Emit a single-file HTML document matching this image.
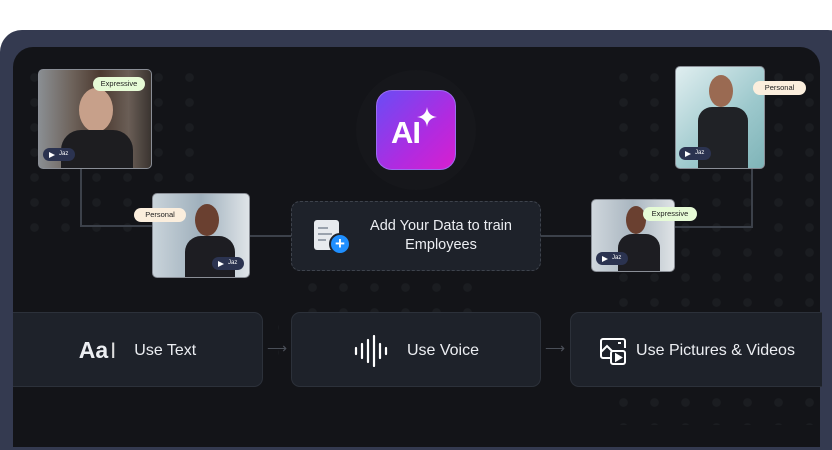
<!DOCTYPE html>
<html><head><meta charset="utf-8"><style>
*{margin:0;padding:0;box-sizing:border-box}
html,body{width:832px;height:420px}
body{background:#fff;position:relative;overflow:hidden;font-family:"Liberation Sans",sans-serif}
.abs{position:absolute}
.bezel{left:0;top:30px;width:850px;height:420px;background:#343a50;border-radius:22px 22px 0 0}
.inner{left:13px;top:47px;width:807px;height:400px;background:#131418;border-radius:20px 20px 0 0;overflow:hidden}
.dots{position:absolute;background-image:radial-gradient(circle,#1b1d21 4px,transparent 4.6px);background-size:31px 25px}
.card{position:absolute;border:1.5px solid #8a8e96;border-radius:5px;overflow:hidden}
.tag{position:absolute;font-size:7.5px;color:#222;border-radius:8px;text-align:center;line-height:14px;height:14px}
.jaz{position:absolute;background:#2b3350;color:#fff;font-size:6px;border-radius:8px;height:13px;line-height:13px;padding:0 7px 0 16px}
.jaz:before{content:"";position:absolute;left:6px;top:3.5px;border-left:6px solid #fff;border-top:3px solid transparent;border-bottom:3px solid transparent}
.line{position:absolute;background:#3c414a}
.box{position:absolute;background:#1e222a;border:1px solid #2c313a;border-radius:9px;color:#eceef2;font-size:16px;display:flex;align-items:center;justify-content:center}
.arr{position:absolute;color:#4a4f58;font-size:14px}
</style></head><body>
<div class="abs bezel"></div>
<div class="abs inner">
 <div class="dots" style="left:6px;top:18px;width:190px;height:175px"></div>
 <div class="dots" style="left:6px;top:268px;width:260px;height:60px"></div>
 <div class="dots" style="left:284px;top:178px;width:190px;height:135px"></div>
 <div class="dots" style="left:595px;top:18px;width:210px;height:360px"></div>
</div>
<!-- lines -->
<div class="line" style="left:80px;top:169px;width:2px;height:57px"></div>
<div class="line" style="left:80px;top:225px;width:74px;height:2px"></div>
<div class="line" style="left:250px;top:235px;width:42px;height:2px"></div>
<div class="line" style="left:540px;top:235px;width:52px;height:2px"></div>
<div class="line" style="left:675px;top:226px;width:78px;height:2px"></div>
<div class="line" style="left:751px;top:169px;width:2px;height:59px"></div>
<!-- AI glow + icon -->
<div class="abs" style="left:356px;top:70px;width:120px;height:120px;border-radius:50%;background:#16171b"></div>
<div class="abs" style="left:376px;top:90px;width:80px;height:80px;border-radius:16px;background:linear-gradient(135deg,#6a4cf5,#b02be0 60%,#d81fcf);border:1px solid #9c6cf0"></div>
<div class="abs" style="left:391px;top:115px;color:#fff;font-weight:bold;font-size:31px;letter-spacing:-1px">AI</div>
<svg class="abs" style="left:416px;top:106px" width="22" height="22" viewBox="0 0 22 22"><path d="M11 1 Q12 10 21 11 Q12 12 11 21 Q10 12 1 11 Q10 10 11 1Z" fill="#fff"/></svg>
<!-- cards -->
<div class="card" style="left:38px;top:69px;width:114px;height:100px;background:linear-gradient(90deg,#8a8e92 0%,#6d625a 30%,#4c3a30 55%,#6a5e56 80%,#3a3430 100%)">
 <div class="abs" style="left:40px;top:18px;width:34px;height:44px;border-radius:50%;background:#c7a08a"></div>
 <div class="abs" style="left:22px;top:60px;width:72px;height:40px;background:#1d1d20;border-radius:20px 20px 0 0"></div>
</div>
<div class="tag" style="left:93px;top:77px;width:52px;background:#e6fbd6">Expressive</div>
<div class="jaz" style="left:43px;top:148px">Jaz</div>
<div class="card" style="left:152px;top:193px;width:98px;height:85px;background:linear-gradient(90deg,#c9d3da,#9fb0bc 50%,#dfe4e8)">
 <div class="abs" style="left:42px;top:10px;width:24px;height:32px;border-radius:50%;background:#6a4030"></div>
 <div class="abs" style="left:32px;top:42px;width:50px;height:45px;background:#1d1d22;border-radius:16px 16px 0 0"></div>
</div>
<div class="tag" style="left:134px;top:208px;width:52px;background:#fbeedd">Personal</div>
<div class="jaz" style="left:212px;top:257px">Jaz</div>
<div class="card" style="left:675px;top:66px;width:90px;height:103px;background:linear-gradient(135deg,#e0eef0,#9cc8cc 60%,#7fb4b8)">
 <div class="abs" style="left:33px;top:8px;width:24px;height:32px;border-radius:50%;background:#9a6a52"></div>
 <div class="abs" style="left:22px;top:40px;width:50px;height:65px;background:#202226;border-radius:14px 14px 0 0"></div>
</div>
<div class="tag" style="left:753px;top:81px;width:53px;background:#fbeedd">Personal</div>
<div class="jaz" style="left:679px;top:147px">Jaz</div>
<div class="card" style="left:591px;top:199px;width:84px;height:73px;background:linear-gradient(90deg,#cfd6dc,#a9b6c0 50%,#dfe3e6)">
 <div class="abs" style="left:34px;top:6px;width:20px;height:28px;border-radius:50%;background:#6a4030"></div>
 <div class="abs" style="left:26px;top:34px;width:42px;height:40px;background:#1d1d22;border-radius:14px 14px 0 0"></div>
</div>
<div class="tag" style="left:643px;top:207px;width:54px;background:#e6fbd6">Expressive</div>
<div class="jaz" style="left:596px;top:252px">Jaz</div>
<!-- middle box -->
<div class="box" style="left:291px;top:201px;width:250px;height:70px;border:1px dashed #3e434c;font-size:14.5px;line-height:19px;text-align:center;padding-left:50px">Add Your Data to train<br>Employees</div>
<div class="abs" style="left:314px;top:220px;width:25px;height:30px;background:#e7eaee;border-radius:3px"></div>
<div class="abs" style="left:318px;top:227px;width:10px;height:2px;background:#9aa2ad"></div>
<div class="abs" style="left:318px;top:233px;width:14px;height:2px;background:#9aa2ad"></div>
<div class="abs" style="left:318px;top:239px;width:8px;height:2px;background:#9aa2ad"></div>
<div class="abs" style="left:329px;top:233px;width:22px;height:22px;border-radius:50%;background:#1f8fff;border:2px solid #1e222a;color:#fff;font-weight:bold;font-size:17px;line-height:17px;text-align:center">+</div>
<!-- bottom boxes -->
<div class="box" style="left:13px;top:312px;width:250px;height:75px;border-left:none;border-radius:0 9px 9px 0;padding-top:2px"><span style="font-weight:bold;font-size:23px;margin-right:2px">Aa</span><span style="font-size:22px;font-weight:300;margin-right:18px;color:#ddd">I</span>Use Text</div>
<div class="arr" style="left:267px;top:340px">⟶</div>
<div class="box" style="left:291px;top:312px;width:250px;height:75px;padding-top:2px">
<svg width="36" height="32" viewBox="0 0 36 32" style="margin-right:18px"><g stroke="#fff" stroke-width="2.2" stroke-linecap="round"><path d="M3 13v6M9 9v14M15 5v22M21 1v30M27 9v14M33 13v6"/></g></svg>Use Voice</div>
<div class="arr" style="left:545px;top:340px">⟶</div>
<div class="box" style="left:570px;top:312px;width:252px;height:75px;border-right:none;border-radius:9px 0 0 9px;padding-top:2px">
<svg width="30" height="30" viewBox="0 0 30 30" style="margin-right:8px" fill="none" stroke="#fff" stroke-width="2"><path d="M12 22H5a2 2 0 0 1-2-2V5a2 2 0 0 1 2-2h20a2 2 0 0 1 2 2v7"/><path d="M3 16l6-6 5 5"/><path d="M20 7h3"/><rect x="13" y="15" width="14" height="13" rx="2"/><path d="M18 18.5v6l5-3z" fill="#fff"/></svg>Use Pictures &amp; Videos</div>
</body></html>
